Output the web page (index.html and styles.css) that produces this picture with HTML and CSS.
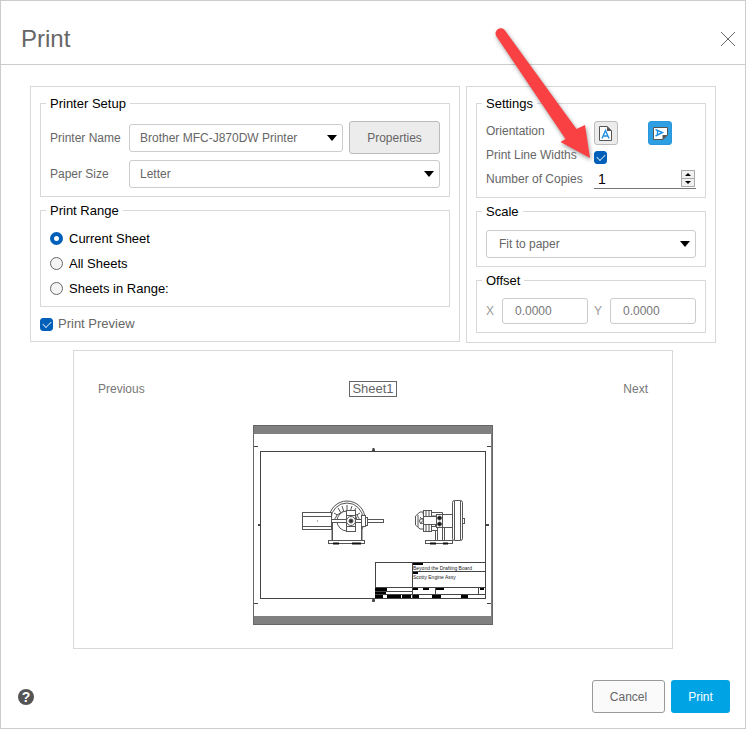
FILE: index.html
```html
<!DOCTYPE html>
<html lang="en">
<head>
  <meta charset="utf-8">
  <title>Print</title>
  <meta name="viewport" content="width=device-width">
  <link rel="stylesheet" href="styles.css">
</head>
<body>

<header>
  <h1>Print</h1>
  <button class="close" aria-label="Close">
    <svg width="14" height="14" viewBox="0 0 14 14"><path d="M0 0L14 14M14 0L0 14"/></svg>
  </button>
</header>

<main>
  <div class="panels">

    <div class="panel">
      <fieldset class="setup">
        <legend>Printer Setup</legend>
        <div class="row">
          <label for="printer">Printer Name</label>
          <span class="select"><select id="printer"><option>Brother MFC-J870DW Printer</option></select></span>
          <button class="properties">Properties</button>
        </div>
        <div class="row">
          <label for="paper">Paper Size</label>
          <span class="select"><select id="paper"><option>Letter</option></select></span>
        </div>
      </fieldset>
      <fieldset class="range">
        <legend>Print Range</legend>
        <label><input type="radio" name="range" checked> Current Sheet</label>
        <label><input type="radio" name="range"> All Sheets</label>
        <label><input type="radio" name="range"> Sheets in Range:</label>
      </fieldset>
      <label class="toggle"><input type="checkbox" checked> Print Preview</label>
    </div>

    <div class="panel">
      <fieldset class="settings">
        <legend>Settings</legend>
        <span class="name">Orientation</span>
        <div class="orientation">
          <button aria-label="Portrait">
            <svg width="24" height="24" viewBox="0 0 24 24">
              <path class="sheet" d="M5.5 5.5H13L17.5 10V19.5H5.5Z"/>
              <path class="fold" d="M13 5L18 10H13Z"/>
              <path class="mark" d="M8 17.5L11.5 9.5L15 17.5M9.5 15H13.5"/>
            </svg>
          </button>
          <button class="active" aria-label="Landscape">
            <svg width="24" height="24" viewBox="0 0 24 24">
              <path class="sheet" d="M5.5 6.5H19.5V14L15 18.5H5.5Z"/>
              <path class="fold" d="M14.5 19V14H19.5Z"/>
              <path class="mark" d="M7.5 8.5L14.5 11.5L7.5 15M9.5 9.5V14"/>
            </svg>
          </button>
        </div>
        <label class="name" for="widths">Print Line Widths</label>
        <input type="checkbox" id="widths" checked>
        <label for="copies">Number of Copies</label>
        <div class="spinner">
          <input type="number" id="copies" value="1" min="1">
          <div class="steps">
            <button aria-label="More"></button>
            <button aria-label="Fewer"></button>
          </div>
        </div>
      </fieldset>
      <fieldset class="scale">
        <legend>Scale</legend>
        <span class="select"><select aria-label="Scale"><option>Fit to paper</option></select></span>
      </fieldset>
      <fieldset class="offset">
        <legend>Offset</legend>
        <label for="x">X</label>
        <input type="text" id="x" value="0.0000">
        <label for="y">Y</label>
        <input type="text" id="y" value="0.0000">
      </fieldset>
      <svg class="arrow" width="100" height="132" viewBox="0 0 100 132">
        <path d="M6.5 9.5A5 5 0 0 1 15 3.5L86.5 102L95 98L100 131L70.5 115L75.5 112Z"/>
      </svg>
    </div>

  </div>

  <section class="preview">
    <nav>
      <a href="#">Previous</a>
      <span class="current">Sheet1</span>
      <a href="#">Next</a>
    </nav>
    <svg class="paper" width="240" height="200" viewBox="0 0 240 200">
      <rect width="240" height="200" fill="#666"/>
      <rect x="1" y="1" width="238" height="198" fill="#808080"/>
      <rect x="1" y="9" width="237" height="182" fill="#fff"/>
      <g class="line">
        <path d="M1 21.5H5M234 21.5H238M1 178.5H5M234 178.5H238"/>
        <rect x="7.5" y="26.5" width="225" height="147"/>
        <path d="M120.5 23V27M119 25.5H122M120.5 173V177M119 175.5H122M5 100H8M233 100H236" stroke-width="2"/>
      </g>

      <!-- side view -->
      <g class="thin">
        <circle cx="94" cy="94" r="18"/>
        <circle cx="94" cy="94" r="16"/>
        <path d="M94 80V86M89 81L91 87M85 83L88 88M99 81L97 87M103 83L100 88M107 88L102 91M81 88L86 91"/>
        <path class="solid" d="M79 96Q83 94 84 90Q94 82 104 90Q105 94 109 96V116H79Z"/>
        <circle class="solid" cx="94" cy="96" r="10"/>
        <path class="solid" stroke="none" d="M80 98H108V115H80Z"/>
        <path d="M79.5 97V116M108.5 97V116M84 96A10 10 0 0 0 94 106"/>
        <rect class="solid" x="49.5" y="87.5" width="29" height="17"/>
        <path d="M49 91.5H79M49 101.5H79M64 96H65"/>
        <rect class="solid" x="78.5" y="94.5" width="52" height="3"/>
        <rect class="solid" x="93.5" y="85.5" width="9" height="21"/>
        <path d="M93 90.5H103M93 101.5H103"/>
        <circle class="solid" cx="98" cy="96" r="4.5"/>
        <circle cx="98" cy="96" r="2" fill="#333"/>
        <rect class="solid" x="108.5" y="90.5" width="4" height="11"/>
        <rect class="solid" x="112.5" y="92.5" width="2" height="8"/>
        <rect class="solid" x="75.5" y="115.5" width="36" height="3"/>
        <path class="dark" d="M80 118.5H86M99 118.5H108"/>
      </g>

      <!-- front view -->
      <g class="thin">
        <rect class="solid" x="182.5" y="95.5" width="9" height="20"/>
        <path d="M184.5 96V115M189.5 96V115"/>
        <path class="solid" d="M170 87H167L162.5 91V100L167 104H172Z"/>
        <path d="M165 90V102M167 92L170 95.5L167 99"/>
        <circle cx="169" cy="96" r="2.5"/>
        <path class="solid" d="M178.5 87.5H189.5V91H178.5ZM175.5 101.5H184.5V105.5H175.5Z"/>
        <rect class="solid" x="170.5" y="85.5" width="8" height="21"/>
        <rect class="solid" x="170.5" y="91.5" width="14" height="8"/>
        <rect class="solid" x="183.5" y="89.5" width="16" height="13"/>
        <path d="M173 85V91M176 85V91M173 100V107M176 100V107M189.5 90V102"/>
        <circle class="dot" cx="186.5" cy="93" r="2"/>
        <circle class="dot" cx="186.5" cy="99" r="2"/>
        <rect class="solid" x="199.5" y="75.5" width="10" height="40" rx="2"/>
        <path d="M201.5 76V115M207.5 76V115"/>
        <rect class="solid" x="209.5" y="93.5" width="2" height="5"/>
        <rect class="solid" x="172.5" y="115.5" width="27" height="3"/>
        <path class="dark" d="M177 118.5H183M190 118.5H195"/>
      </g>

      <!-- title block -->
      <g class="line">
        <rect x="122.5" y="137.5" width="110" height="36"/>
        <path d="M159.5 137V174M159 146.5H233M122 162.5H233M122 166.5H160M122 169.5H233M182.5 162V170M225.5 162V170"/>
      </g>
      <path fill="#000" d="M160 138h10v2h-10zM160 147h5v2h-5zM122 163h12v3h-12zM122 167h11v2h-11zM122 170h8v3h-8zM134 170h14v3h-14zM149 170h9v3h-9zM160 163h5v2h-5zM170 163h6v2h-6zM183 163h8v2h-8zM227 163h4v2h-4zM160 170h6v3h-6zM179 170h9v3h-9zM208 170h7v3h-7z"/>
      <text x="160" y="145">Beyond the Drafting Board</text>
      <text x="160" y="154">Scotty Engine Assy</text>
    </svg>
  </section>
</main>

<footer>
  <button class="help" aria-label="Help">?</button>
  <button class="cancel">Cancel</button>
  <button class="print">Print</button>
</footer>

</body>
</html>
```
FILE: styles.css
```css
* { box-sizing: border-box; }
body { display: flex; flex-direction: column; min-height: 100vh; margin: 0; border: 1px solid #ccc; background-color: white; color: #666; font: 12px/16px "Liberation Sans", Arial, sans-serif; }
button, input, select { margin: 0; padding: 0; font: inherit; color: inherit; }
button { border: 1px solid #bbb; border-radius: 3px; background-color: #ececec; }

header { display: flex; align-items: center; justify-content: space-between; height: 64px; padding: 12px 10px 0 20px; border-bottom: 1px solid #ccc; }
h1 { margin: 0; font-size: 24px; line-height: 28px; font-weight: normal; }
.close { display: flex; border: none; background: none; }
.close svg { stroke: #666; }

.panels { display: grid; grid-template-columns: 1fr 250px; align-items: start; gap: 6px; padding: 21px 29px 0; }
.panel { position: relative; padding: 8px 9px 9px; border: 1px solid #d8d8d8; }

fieldset { min-width: 0; margin: 0 0 5px; padding: 9px 9px 8px; border: 1px solid #d8d8d8; }
legend { margin-left: -4px; padding: 0 4px; color: black; font-size: 13px; line-height: 17px; }

.select { position: relative; display: block; flex: 1; }
.select::after { content: ""; position: absolute; right: 6px; top: 11px; border: 5px solid transparent; border-top: 6px solid black; border-bottom: none; pointer-events: none; }
select { display: block; width: 100%; height: 28px; padding: 0 10px; border: 1px solid #ccc; border-radius: 3px; appearance: none; background-color: white; }

.row { display: flex; align-items: center; }
.row + .row { margin-top: 6px; }
.row label { width: 79px; }
.properties { width: 91px; height: 33px; margin-left: 6px; }

.range { padding: 7px 9px 5px; }
.range label { display: flex; align-items: center; gap: 6px; height: 25px; color: black; font-size: 13px; }
.toggle { display: flex; align-items: center; gap: 5px; padding-top: 4px; font-size: 13px; }

input[type=radio], input[type=checkbox] { width: 13px; height: 13px; appearance: none; border: 1px solid #666; border-radius: 50%; background-color: #f4f4f4; }
input[type=radio]:checked { border: 4px solid #005fb8; background-color: white; }
input[type=checkbox] { display: flex; align-items: center; justify-content: center; border-radius: 3px; }
input[type=checkbox]:checked { border-color: #005fb8; background-color: #005fb8; }
input[type=checkbox]:checked::after { content: ""; width: 7px; height: 4px; margin-bottom: 2px; border: solid #cde; border-width: 0 0 1px 1px; transform: rotate(-45deg); }

.settings { display: grid; grid-template-columns: 108px 1fr; grid-template-rows: 24px 24px 20px; align-items: center; }
.name { padding-bottom: 4px; }
.orientation { display: flex; gap: 30px; }
.orientation button { display: flex; width: 24px; height: 24px; }
.orientation svg { flex: none; margin: -1px; }
.orientation .active { border-color: #2a97dc; background-color: #2f9fe3; }
.sheet { fill: white; stroke: #555; }
.fold { fill: #555; }
.mark { fill: none; stroke: #1e90e6; stroke-width: 1.4; }

.spinner { display: flex; min-width: 0; height: 20px; padding-right: 1px; border-bottom: 1px solid #777; }
.spinner input { flex: 1; min-width: 0; padding-left: 4px; border: none; outline: none; appearance: textfield; color: black; font-size: 14px; background: none; }
.spinner input::-webkit-inner-spin-button { display: none; }
.steps { display: flex; flex-direction: column; width: 14px; height: 17px; margin-top: 1px; border: 1px solid #aaa; }
.steps button { display: flex; flex: 1; align-items: center; justify-content: center; border: none; border-radius: 0; background-color: #f0f0f0; }
.steps button + button { border-top: 1px solid #aaa; }
.steps button::after { content: ""; border: 3px solid transparent; border-bottom-color: black; border-top: none; }
.steps button + button::after { border: 3px solid transparent; border-top-color: black; border-bottom: none; }

.scale { padding-top: 10px; }
.scale select { padding-left: 12px; }
.offset { display: flex; align-items: center; margin: 0; }
.offset label { width: 16px; color: #999; }
.offset input { flex: 1; min-width: 0; height: 26px; padding: 0 12px; border: 1px solid #ccc; border-radius: 3px; color: #777; }
.offset input + label { width: 22px; padding-left: 6px; }

.arrow { position: absolute; top: -60px; left: 23px; overflow: visible; fill: #f94144; filter: drop-shadow(1px 2px 2px rgba(0, 0, 0, .4)); pointer-events: none; }

.preview { display: flex; flex-direction: column; align-items: center; max-width: 600px; margin: 7px auto 0; padding: 30px 24px 23px; border: 1px solid #d8d8d8; }
nav { display: grid; grid-template-columns: 1fr auto 1fr; align-items: center; align-self: stretch; margin-bottom: 28px; }
nav a { color: #777; text-decoration: none; }
nav a:last-child { text-align: right; }
.current { padding: 0 2px; border: 1px solid #666; font-size: 13px; line-height: 14px; }
.line { fill: none; stroke: #444; }
.thin { fill: none; stroke: #555; }
.solid { fill: white; }
.dot { fill: #111; }
.dark { stroke: #111; stroke-width: 2; }
.paper text { fill: #222; font-size: 5px; }

footer { display: flex; align-items: center; gap: 6px; margin-top: auto; padding: 0 15px 15px 17px; }
footer button { height: 33px; }
.help { width: 16px; height: 16px; margin-right: auto; border: none; border-radius: 50%; background-color: #555; color: white; font-size: 14px; font-weight: bold; }
.cancel { width: 73px; border-color: #999; background-color: #fafafa; }
.print { width: 59px; border: none; background-color: #00a4e4; color: white; }
```
